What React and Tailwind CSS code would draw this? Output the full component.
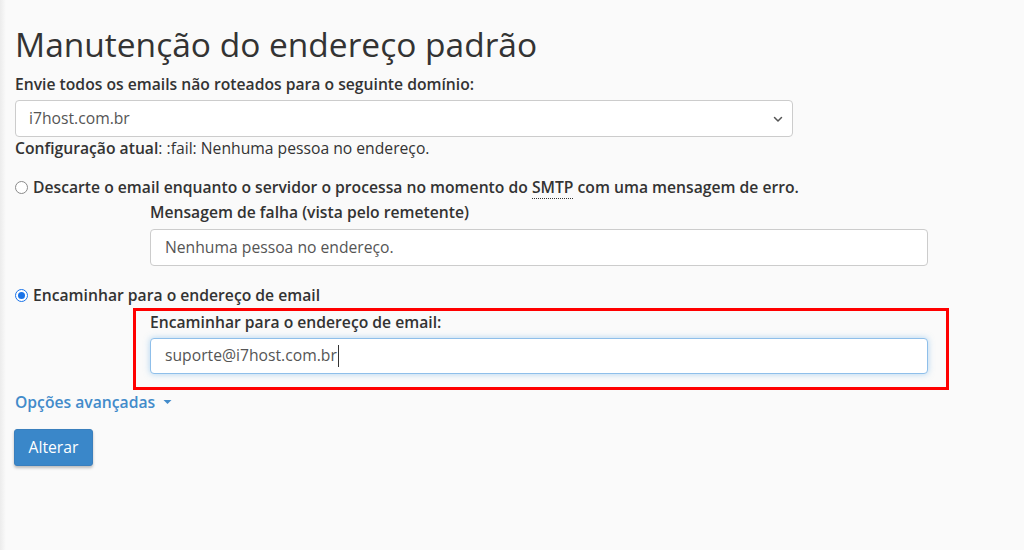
import React from "react";

function Radio({ checked }) {
  return checked ? (
    <span className="inline-flex items-center justify-center w-[13px] h-[13px] rounded-full border-[1.5px] border-[#1a73e8] bg-white mr-[5px] shrink-0">
      <span className="w-[7px] h-[7px] rounded-full bg-[#1a73e8]" />
    </span>
  ) : (
    <span className="inline-block w-[13px] h-[13px] rounded-full border border-[#8a8a8a] bg-white mr-[5px] shrink-0" />
  );
}

export default function App() {
  return (
    <div
      className="relative min-h-[550px] w-full bg-[#fafafa] text-[#333] text-[15.7px]"
      style={{ fontFamily: '"Open Sans", "Liberation Sans", sans-serif' }}
    >
      <div className="absolute left-0 top-0 bottom-0 w-[6px] bg-gradient-to-r from-[#ececec] to-[#fafafa]" />
      <div className="relative pl-[15px] pt-[20px]">
        <h1 className="text-[33.5px] leading-[48px] font-normal text-[#333] m-0">
          Manutenção do endereço padrão
        </h1>
        <div className="mt-[5px] font-semibold leading-[22px]">
          Envie todos os emails não roteados para o seguinte domínio:
        </div>
        <div className="mt-[5px] w-[778px] h-[37px] bg-white border border-[#ccc] rounded-[4px] flex items-center justify-between pl-[13px] pr-[8px] text-[#555]">
          <span>i7host.com.br</span>
          <svg width="12" height="12" viewBox="0 0 12 12" fill="none">
            <path d="M2.5 4.5 L6 8 L9.5 4.5" stroke="#555" strokeWidth="1.5" strokeLinecap="round" strokeLinejoin="round" />
          </svg>
        </div>
        <div className="leading-[22px]">
          <span className="font-semibold">Configuração atual</span>: :fail: Nenhuma pessoa no endereço.
        </div>

        <div className="mt-[17px] flex items-center font-semibold leading-[22px]">
          <Radio checked={false} />
          <span>
            Descarte o email enquanto o servidor o processa no momento do{" "}
            <abbr className="border-b border-dotted border-[#333]" style={{ textDecoration: "none" }}>SMTP</abbr>{" "}
            com uma mensagem de erro.
          </span>
        </div>
        <div className="ml-[135px]">
          <div className="mt-[3px] font-semibold leading-[22px]">Mensagem de falha (vista pelo remetente)</div>
          <div className="mt-[6px] w-[778px] h-[37px] bg-white border border-[#ccc] rounded-[4px] flex items-center pl-[14px] text-[#555]">
            Nenhuma pessoa no endereço.
          </div>
        </div>

        <div className="mt-[18px] flex items-center font-semibold leading-[22px]">
          <Radio checked={true} />
          <span>Encaminhar para o endereço de email</span>
        </div>
        <div className="ml-[118px] mt-[2px] w-[816px] border-[3px] border-[#f00] pl-[14px] pt-0 pb-[13px]">
          <div className="font-semibold leading-[22px]">Encaminhar para o endereço de email:</div>
          <div className="mt-[5px] w-[778px] h-[36px] bg-white border border-[#8fbfea] rounded-[4px] flex items-center pl-[14px] text-[#555] shadow-[0_0_6px_rgba(102,175,233,0.5)]">
            <span>suporte@i7host.com.br</span>
            <span className="inline-block w-[1px] h-[22px] bg-[#333] ml-[1px]" />
          </div>
        </div>

        <div className="mt-[1px] flex items-center font-semibold text-[#428bca] leading-[22px]">
          <span>Opções avançadas</span>
          <svg className="ml-[8px]" width="9" height="6" viewBox="0 0 9 6">
            <path d="M0.5 1 L8.5 1 L4.5 5 Z" fill="#428bca" />
          </svg>
        </div>

        <button className="mt-[16px] -ml-[1px] w-[79px] h-[37px] bg-[#3a87c9] text-white rounded-[3px] border border-[#3a7fbd] shadow-[0_2px_3px_rgba(0,0,0,0.25)] text-[15.7px]">
          Alterar
        </button>
      </div>
    </div>
  );
}
